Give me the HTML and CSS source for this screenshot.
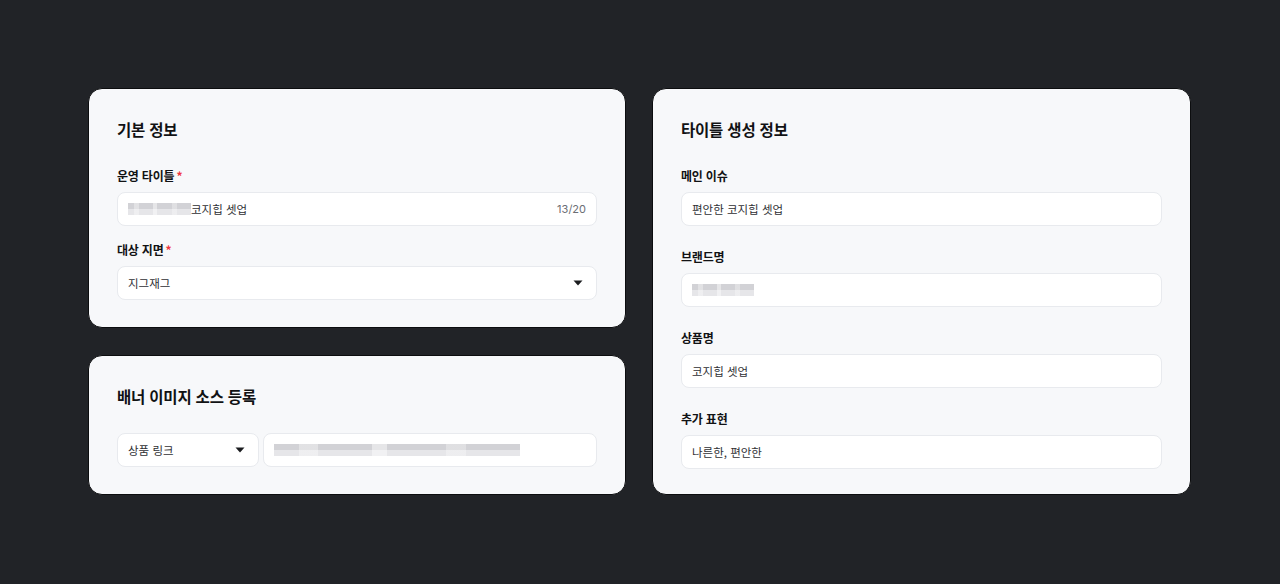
FILE: index.html
```html
<!DOCTYPE html>
<html lang="ko">
<head>
<meta charset="utf-8">
<link rel="stylesheet" href="styles.css">
</head>
<body>
<main class="board">
  <div class="col">
    <section class="card">
      <h2 class="card-title">기본 정보</h2>
      <div class="field">
        <label class="label">운영 타이틀<span class="req">*</span></label>
        <div class="input">
          <span class="blur w63"></span><span class="val">코지힙 셋업</span>
          <span class="count">13/20</span>
        </div>
      </div>
      <div class="field field-tight">
        <label class="label">대상 지면<span class="req">*</span></label>
        <div class="input select">
          <span class="val">지그재그</span>
          <svg class="caret" width="10" height="6" viewBox="0 0 10 6"><path d="M0.5 0.5h9L5 5.5z" fill="#1b1c1f"/></svg>
        </div>
      </div>
    </section>
    <section class="card card-banner">
      <h2 class="card-title">배너 이미지 소스 등록</h2>
      <div class="row">
        <div class="input select small">
          <span class="val">상품 링크</span>
          <svg class="caret" width="10" height="6" viewBox="0 0 10 6"><path d="M0.5 0.5h9L5 5.5z" fill="#1b1c1f"/></svg>
        </div>
        <div class="input grow">
          <span class="blur w246"></span>
        </div>
      </div>
    </section>
  </div>
  <section class="card card-tall">
    <h2 class="card-title">타이틀 생성 정보</h2>
    <div class="field">
      <label class="label">메인 이슈</label>
      <div class="input"><span class="val">편안한 코지힙 셋업</span></div>
    </div>
    <div class="field">
      <label class="label">브랜드명</label>
      <div class="input"><span class="blur w62"></span></div>
    </div>
    <div class="field">
      <label class="label">상품명</label>
      <div class="input"><span class="val">코지힙 셋업</span></div>
    </div>
    <div class="field">
      <label class="label">추가 표현</label>
      <div class="input"><span class="val">나른한, 편안한</span></div>
    </div>
  </section>
</main>
</body>
</html>
```

FILE: styles.css
```css
* { box-sizing: border-box; }
html, body { margin: 0; padding: 0; }
body {
  background: #212327;
  font-family: "Noto Sans CJK KR", "Noto Sans", sans-serif;
  color: #111214;
  width: 1280px;
  height: 584px;
  overflow: hidden;
}
.board {
  display: grid;
  grid-template-columns: 538px 539px;
  gap: 26px;
  width: 1103px;
  margin: 88px 0 0 88px;
  align-items: stretch;
}
.col {
  display: flex;
  flex-direction: column;
  gap: 27px;
}
.card {
  background: #f7f8fa;
  border: 1px solid #0c0d0f;
  border-radius: 14px;
  padding: 28px 28px 27px;
}
.card-banner { flex: 1; }
.card-tall { padding-bottom: 25px; }
.card-title {
  margin: 0;
  font-size: 15.5px;
  font-weight: 700;
  line-height: 24px;
  letter-spacing: -0.2px;
}
.field { margin-top: 25px; }
.field-tight { margin-top: 14px; }
.card-tall .field + .field { margin-top: 21px; }
.label {
  display: block;
  font-size: 12px;
  font-weight: 700;
  line-height: 20px;
  margin-bottom: 6px;
  letter-spacing: -0.2px;
}
.req { color: #f0373e; margin-left: 2px; }
.input {
  height: 34px;
  background: #fff;
  border: 1px solid #e8eaee;
  border-radius: 8px;
  display: flex;
  align-items: center;
  padding: 0 10px;
  font-size: 11.5px;
  color: #2f3034;
}
.val { line-height: 16px; }
.count { margin-left: auto; color: #6b6e74; font-size: 11px; font-family: Inter, "Noto Sans", sans-serif; }
.select { justify-content: space-between; padding-right: 13px; }
.caret { display: block; }
.row {
  display: flex;
  gap: 4px;
  margin-top: 25px;
}
.small { width: 142px; flex: none; }
.grow { flex: 1; }
.blur {
  display: inline-block;
  height: 12px;
  background:
    linear-gradient(90deg, rgba(255,255,255,0.0) 0 10%, rgba(255,255,255,0.35) 10% 18%, rgba(255,255,255,0) 18% 40%, rgba(255,255,255,0.45) 40% 46%, rgba(255,255,255,0) 46% 70%, rgba(255,255,255,0.3) 70% 78%, rgba(255,255,255,0) 78%),
    linear-gradient(180deg, #d2d2d6 0 50%, #e6e6e9 50%);
}
.w63 { width: 63px; }
.w62 { width: 62px; }
.w246 { width: 246px; }
```
